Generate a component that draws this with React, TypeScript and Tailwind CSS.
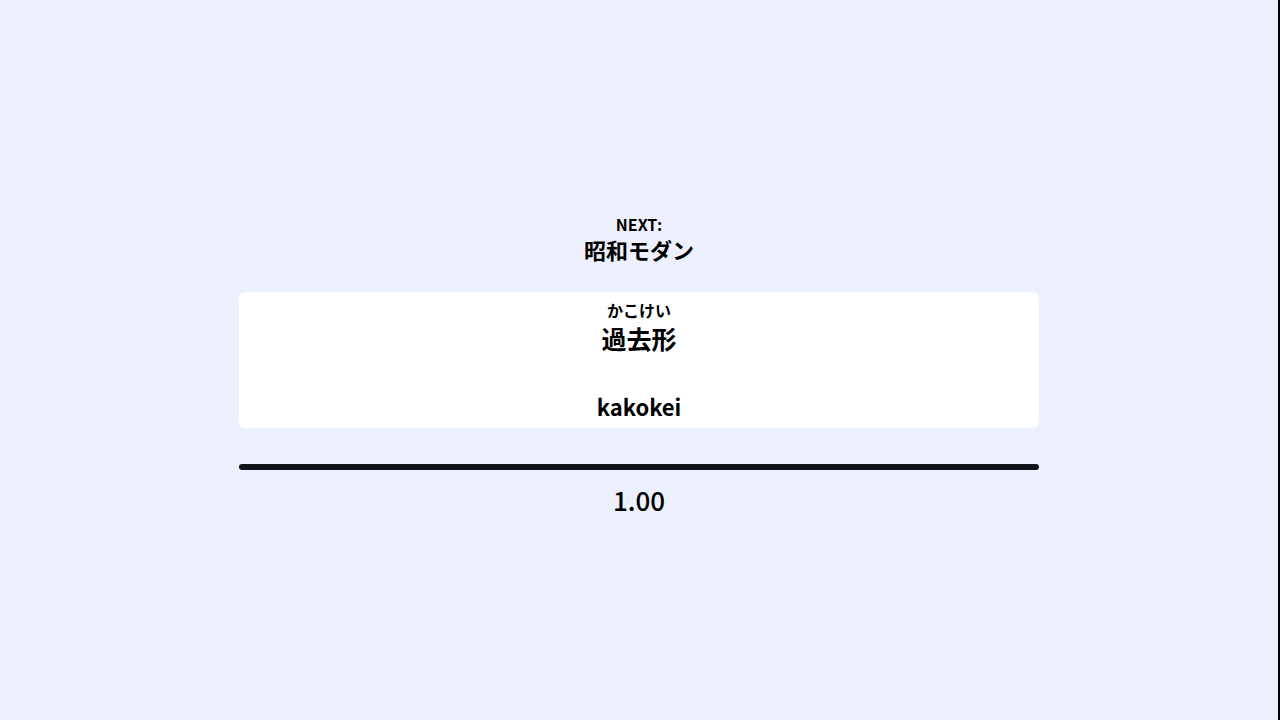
export default function App() {
  const jp = { fontFamily: '"Noto Sans CJK JP", "Noto Sans", sans-serif' };
  return (
    <div className="flex h-screen w-full">
      <div className="flex min-w-0 flex-1 flex-col items-center justify-center bg-[#edf0ff] pt-[12px] text-black" style={jp}>
        <div className="text-[16px] font-bold leading-[20px]">NEXT:</div>
        <div className="text-[22px] font-bold leading-[30px]">昭和モダン</div>
        <div className="mt-[28px] flex w-[800px] flex-col items-center rounded-md bg-white pt-[6px] pb-[5px]">
          <div className="text-[16px] font-bold leading-[24px]">かこけい</div>
          <div className="text-[25px] font-bold leading-[32px]">過去形</div>
          <div className="h-[35px]" />
          <div className="text-[22px] font-bold leading-[34px]">kakokei</div>
        </div>
        <div className="mt-[36px] h-[6px] w-[800px] rounded-full bg-[#0f141a]" />
        <div className="mt-[12px] text-[26px] font-medium leading-[36px]">1.00</div>
      </div>
      <div className="h-full w-[2px] shrink-0 bg-black" />
    </div>
  );
}
